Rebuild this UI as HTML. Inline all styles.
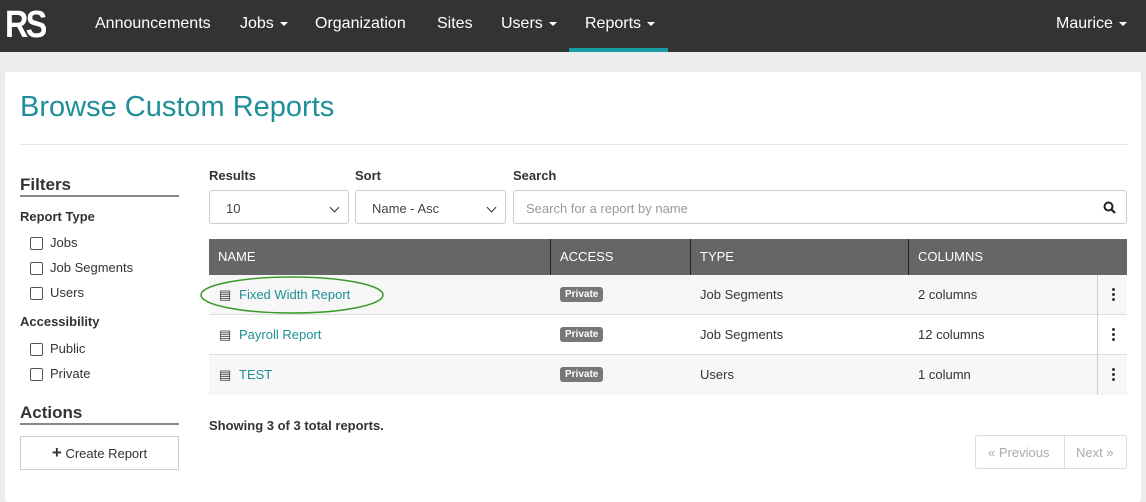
<!DOCTYPE html>
<html><head><style>
*{box-sizing:border-box;margin:0;padding:0}
body{width:1146px;height:491px;overflow:hidden;background:#ececec;font-family:"Liberation Sans",sans-serif;color:#333;font-size:14px;position:relative}
.nav{position:absolute;left:0;top:0;width:1146px;height:52px;background:#333}
.nav .logo{position:absolute;left:5px;top:6px;color:#fff;font-weight:bold;font-size:38px;letter-spacing:-3px;transform:scaleX(0.85);transform-origin:left;line-height:38px}
.nav a{position:absolute;top:15px;color:#fff;font-size:16px}
.car{display:inline-block;border-left:4px solid transparent;border-right:4px solid transparent;border-top:4px solid #fff;vertical-align:middle;margin-left:6px}
.ul{position:absolute;left:569px;top:48px;width:99px;height:4px;background:#1a9ca4}
.card{position:absolute;left:5px;top:72px;width:1136px;height:430px;background:#fff;border-radius:3px}
h1{position:absolute;left:20px;top:91px;font-weight:normal;font-size:29px;color:#1e8f98}
.hr{position:absolute;left:20px;top:144px;width:1107px;height:1px;background:#e5e5e5}
.abs{position:absolute}
.h3{font-size:17px;font-weight:bold;color:#333}
.bar{position:absolute;left:20px;width:159px;height:2px;background:#888}
.lab{font-size:13px;font-weight:bold}
.cb{position:absolute;left:30px;width:13px;height:13px;border:1px solid #555;border-radius:2px}
.ct{position:absolute;left:50px;font-size:13px}
.sel{position:absolute;top:190px;height:34px;border:1px solid #ccc;border-radius:3px;font-size:13px;padding:10px 0 0 16px;color:#444}
.sel:after{content:"";position:absolute;right:10px;top:13px;width:6px;height:6px;border-right:1.5px solid #333;border-bottom:1.5px solid #333;transform:rotate(45deg)}
.th{position:absolute;top:239px;height:36px;background:#666;color:#fff;font-size:13px;padding:10px 9px}
.row{position:absolute;left:209px;width:918px;height:40px;border-bottom:1px solid #ddd}
.cell{position:absolute;font-size:13px;top:12px}
.badge{position:absolute;left:351px;top:12px;background:#777;color:#fff;font-size:10px;font-weight:bold;padding:2px 5px;border-radius:3px}
.dots{position:absolute;left:888px;top:0;width:30px;height:40px;border-left:1px solid #ccc}
.dots i{position:absolute;left:14px;width:3px;height:3px;background:#333;border-radius:50%}
.link{color:#1e8f98}
</style></head><body>
<div class="nav"><div class="logo">RS</div>
<a style="left:95px">Announcements</a><a style="left:240px">Jobs<span class="car"></span></a><a style="left:315px">Organization</a><a style="left:437px">Sites</a><a style="left:501px">Users<span class="car"></span></a><a style="left:585px">Reports<span class="car"></span></a><a style="left:1056px">Maurice<span class="car"></span></a>
<div class="ul"></div></div>
<div class="card"></div>
<h1>Browse Custom Reports</h1>
<div class="hr"></div>
<div class="abs h3" style="left:20px;top:175px">Filters</div><div class="bar" style="top:195px"></div>
<div class="abs lab" style="left:20px;top:209px">Report Type</div>
<div class="cb" style="top:237px"></div><div class="ct" style="top:235px">Jobs</div>
<div class="cb" style="top:262px"></div><div class="ct" style="top:260px">Job Segments</div>
<div class="cb" style="top:287px"></div><div class="ct" style="top:285px">Users</div>
<div class="abs lab" style="left:20px;top:314px">Accessibility</div>
<div class="cb" style="top:343px"></div><div class="ct" style="top:341px">Public</div>
<div class="cb" style="top:368px"></div><div class="ct" style="top:366px">Private</div>
<div class="abs h3" style="left:20px;top:403px">Actions</div><div class="bar" style="top:423px"></div>
<div class="abs" style="left:20px;top:436px;width:159px;height:34px;border:1px solid #ccc;font-size:13px;text-align:center;padding-top:9px"><b style="font-size:17px;line-height:10px">+</b> Create Report</div>
<div class="abs lab" style="left:209px;top:168px">Results</div>
<div class="abs lab" style="left:355px;top:168px">Sort</div>
<div class="abs lab" style="left:513px;top:168px">Search</div>
<div class="sel" style="left:209px;width:140px">10</div>
<div class="sel" style="left:355px;width:151px">Name - Asc</div>
<div class="abs" style="left:513px;top:190px;width:614px;height:34px;border:1px solid #ccc;border-radius:3px;font-size:13px;padding:10px 12px;color:#999">Search for a report by name
<svg style="position:absolute;right:10px;top:10px" width="13" height="13" viewBox="0 0 13 13"><circle cx="5.5" cy="5.5" r="4" fill="none" stroke="#222" stroke-width="2"/><path d="M8.5 8.5L12 12" stroke="#222" stroke-width="2.2"/></svg></div>
<div class="th" style="left:209px;width:342px;border-right:1px solid #222">NAME</div>
<div class="th" style="left:551px;width:140px;border-right:1px solid #222">ACCESS</div>
<div class="th" style="left:691px;width:218px;border-right:1px solid #222">TYPE</div>
<div class="th" style="left:909px;width:218px">COLUMNS</div>
<div class="row" style="top:275px;background:#f7f7f7"><span class="cell" style="left:10px">▤</span><span class="cell link" style="left:30px">Fixed Width Report</span><span class="badge">Private</span><span class="cell" style="left:491px">Job Segments</span><span class="cell" style="left:709px">2 columns</span><div class="dots"><i style="top:13px"></i><i style="top:18px"></i><i style="top:23px"></i></div></div>
<div class="row" style="top:315px"><span class="cell" style="left:10px">▤</span><span class="cell link" style="left:30px">Payroll Report</span><span class="badge">Private</span><span class="cell" style="left:491px">Job Segments</span><span class="cell" style="left:709px">12 columns</span><div class="dots"><i style="top:13px"></i><i style="top:18px"></i><i style="top:23px"></i></div></div>
<div class="row" style="top:355px;background:#f7f7f7;border-bottom:none"><span class="cell" style="left:10px">▤</span><span class="cell link" style="left:30px">TEST</span><span class="badge">Private</span><span class="cell" style="left:491px">Users</span><span class="cell" style="left:709px">1 column</span><div class="dots"><i style="top:13px"></i><i style="top:18px"></i><i style="top:23px"></i></div></div>
<svg class="abs" style="left:198px;top:274px" width="190" height="42"><ellipse cx="94" cy="21" rx="91" ry="18" fill="none" stroke="#3a9a2a" stroke-width="1.5"/></svg>
<div class="abs lab" style="left:209px;top:418px">Showing 3 of 3 total reports.</div>
<div class="abs" style="left:975px;top:435px;width:152px;height:34px;border:1px solid #ddd;border-radius:3px;font-size:13px;color:#aaa">
<span class="abs" style="left:12px;top:9px">« Previous</span><div class="abs" style="left:88px;top:0;width:1px;height:32px;background:#ddd"></div><span class="abs" style="left:100px;top:9px">Next »</span></div>
</body></html>
